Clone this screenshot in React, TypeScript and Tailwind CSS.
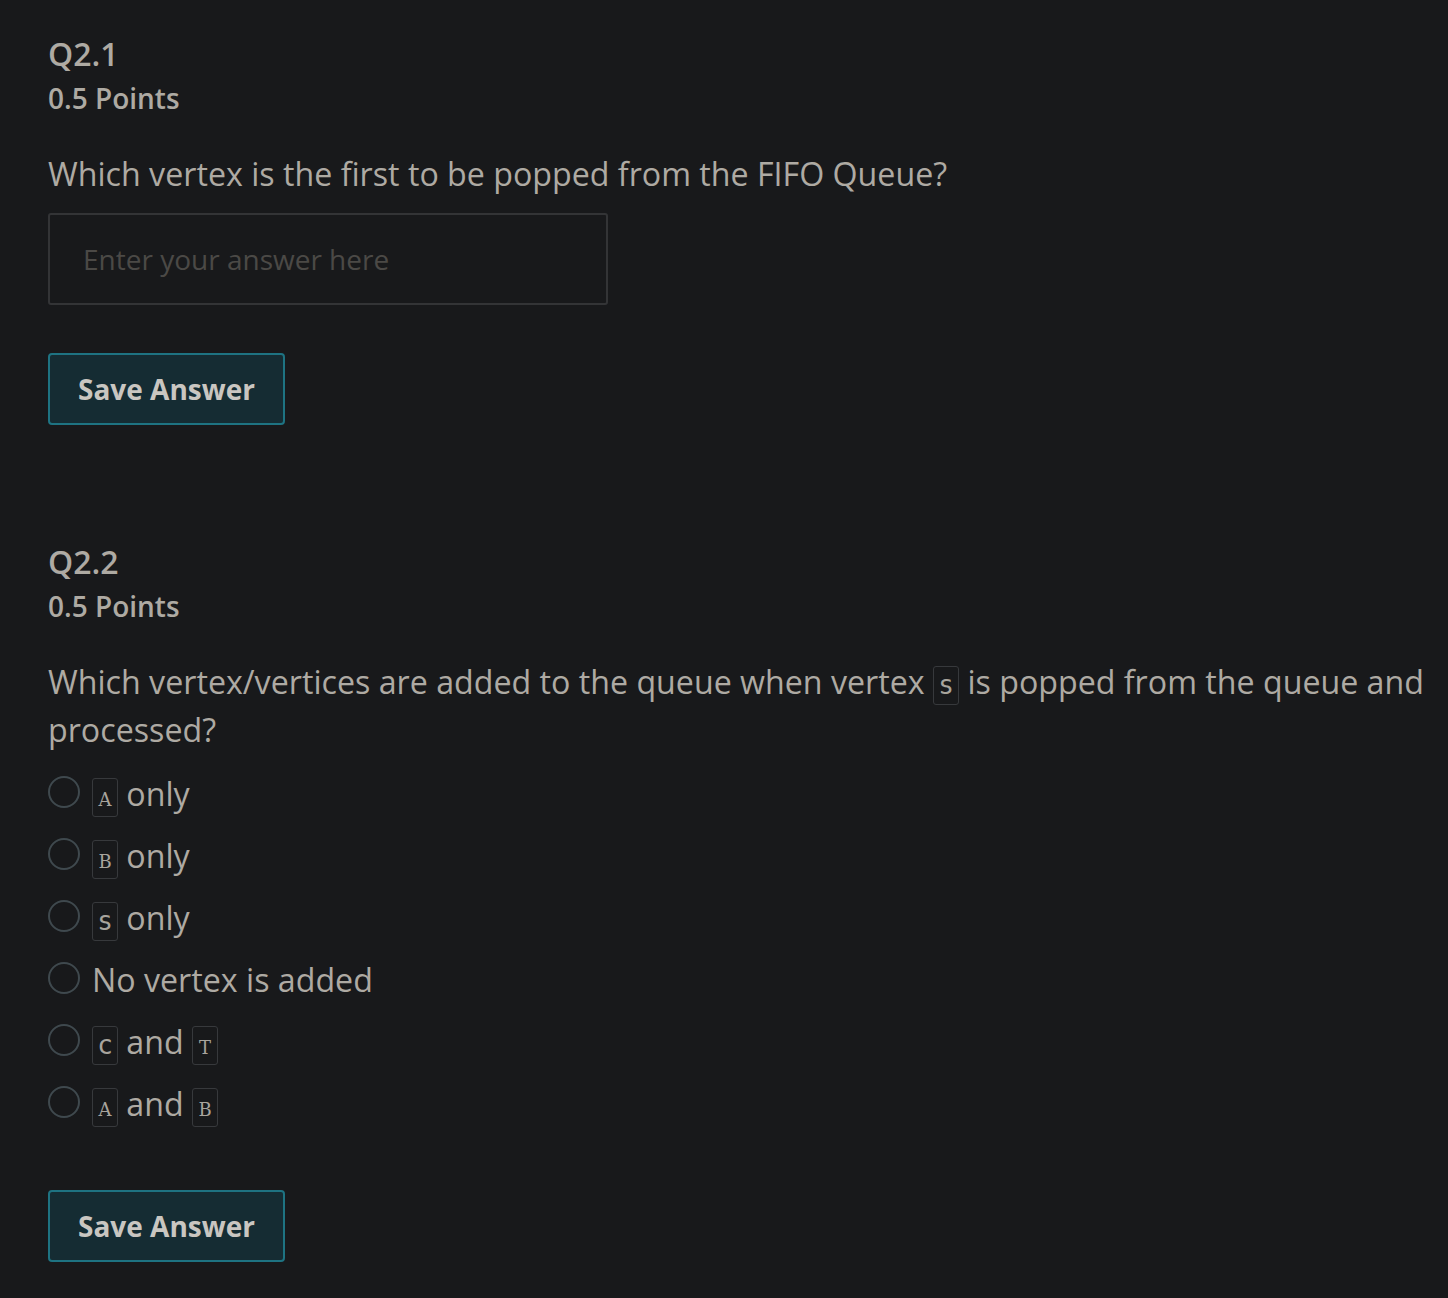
const FONT = { fontFamily: '"Open Sans", "Noto Sans", sans-serif' };

// lowercase letters in the reference render large and plain, capitals small with slab serifs
function Code({ children }: { children: string }) {
  const lower = children === children.toLowerCase();
  return lower ? (
    <code className="inline-block w-[26px] rounded-[3px] border border-[#37393c] pt-[5px] pb-[6px] text-center align-baseline font-['DejaVu_Sans_Mono',monospace] text-[26px] leading-[26px] text-[#a8a49d]">
      {children}
    </code>
  ) : (
    <code className="inline-block w-[26px] rounded-[3px] border border-[#37393c] pt-[12px] pb-[7px] text-center align-baseline font-['DejaVu_Serif',serif] text-[18px] leading-[18px] text-[#a8a49d]">
      {children}
    </code>
  );
}

function Heading({ q }: { q: string }) {
  return (
    <div>
      <h2 className="text-[32px] font-semibold leading-[44px] text-[#aeaaa3]">{q}</h2>
      <div className="text-[28px] font-semibold leading-[44px] text-[#aeaaa3]">0.5 Points</div>
    </div>
  );
}

function SaveButton() {
  return (
    <button className="h-[72px] w-[237px] rounded-[4px] border-2 border-[#1e7382] bg-[#152c33] text-[28px] font-bold text-[#c9c6c1]">
      Save Answer
    </button>
  );
}

const options: React.ReactNode[] = [
  <><Code>A</Code> only</>,
  <><Code>B</Code> only</>,
  <><Code>s</Code> only</>,
  <>No vertex is added</>,
  <><Code>c</Code> and <Code>T</Code></>,
  <><Code>A</Code> and <Code>B</Code></>,
];

export default function App() {
  return (
    <div className="min-h-screen bg-[#18191b] pt-[32px] pr-[14px] pb-10 pl-12 text-[#aeaaa3]" style={FONT}>
      <section>
        <Heading q="Q2.1" />
        <p className="mt-[30px] text-[32.2px] leading-[48px]">Which vertex is the first to be popped from the FIFO Queue?</p>
        <input
          className="mt-[15px] block h-[92px] w-[560px] rounded-[3px] border-2 border-[#333436] bg-transparent px-[33px] text-[28px] text-[#aeaaa3] outline-none placeholder:text-[#4b4946]"
          placeholder="Enter your answer here"
        />
        <div className="mt-[48px]">
          <SaveButton />
        </div>
      </section>

      <section className="mt-[115px]">
        <Heading q="Q2.2" />
        <p className="mt-[30px] text-[32.2px] leading-[48px]">
          Which vertex/vertices are added to the queue when vertex <Code>s</Code> is popped from the queue and processed?
        </p>
        <div className="mt-[16px] flex flex-col">
          {options.map((o, i) => (
            <label key={i} className="flex h-[62px] items-start gap-[12px]">
              <span className="mt-[6px] h-[32px] w-[32px] shrink-0 rounded-full border-2 border-[#3f494e]" />
              <span className="text-[32.2px] leading-[48px]">{o}</span>
            </label>
          ))}
        </div>
        <div className="mt-[48px]">
          <SaveButton />
        </div>
      </section>
    </div>
  );
}
